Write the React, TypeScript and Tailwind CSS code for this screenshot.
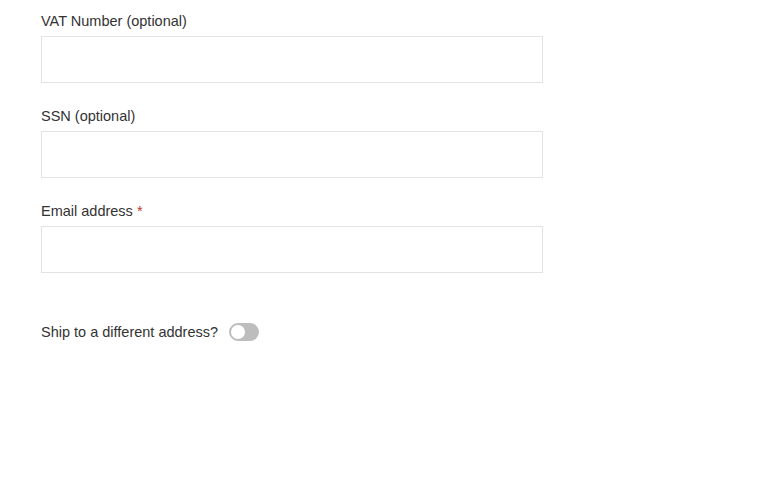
import { useState } from "react";

const fields = [
  { id: "vat", label: "VAT Number (optional)", required: false },
  { id: "ssn", label: "SSN (optional)", required: false },
  { id: "email", label: "Email address", required: true },
];

export default function App() {
  const [ship, setShip] = useState(false);

  return (
    <div
      className="min-h-[478px] w-full bg-white pl-[41px] pt-[11px] text-[#333333]"
      style={{ fontFamily: '"Liberation Sans", Arial, sans-serif' }}
    >
      <form className="flex w-[502px] flex-col gap-[23px]">
        {fields.map((f) => (
          <div key={f.id} className="flex flex-col">
            <label htmlFor={f.id} className="mb-[5px] text-[14.5px] leading-[20px]">
              {f.label}
              {f.required && <span className="ml-[4px] text-[#c0392b]">*</span>}
            </label>
            <input
              id={f.id}
              type={f.id === "email" ? "email" : "text"}
              className="h-[47px] w-full border border-[#e3e3e3] bg-white px-3 text-[14px] outline-none"
            />
          </div>
        ))}
      </form>

      <div className="mt-[49px] flex h-[20px] items-center gap-[11px] text-[14.5px] leading-[20px]">
        <span>Ship to a different address?</span>
        <button
          type="button"
          onClick={() => setShip(!ship)}
          className={`relative h-[18px] w-[30px] rounded-full ${ship ? "bg-[#4a90e2]" : "bg-[#bdbdbd]"}`}
        >
          <span
            className={`absolute top-[2px] h-[14px] w-[14px] rounded-full bg-white ${ship ? "left-[14px]" : "left-[2px]"}`}
          />
        </button>
      </div>
    </div>
  );
}
